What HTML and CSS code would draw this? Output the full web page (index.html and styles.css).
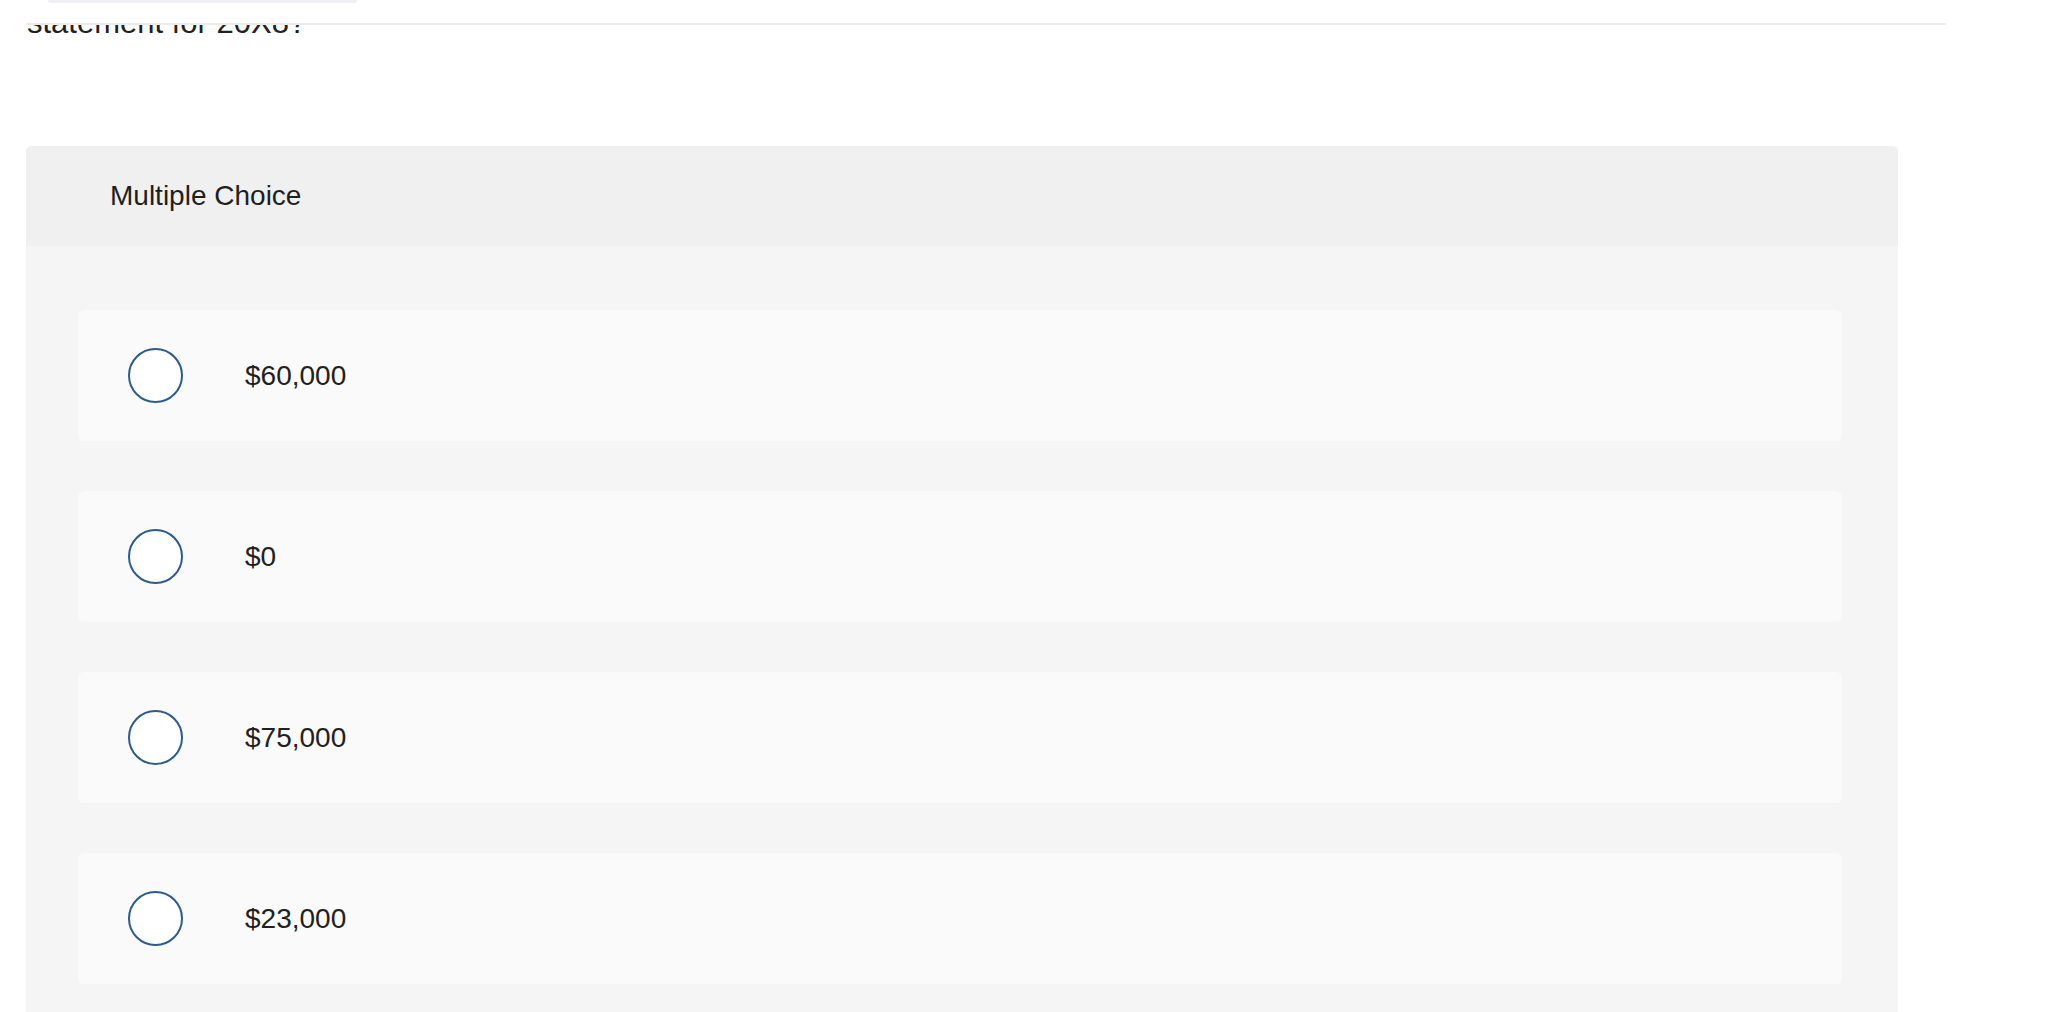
FILE: index.html
```html
<!DOCTYPE html>
<html lang="en">
<head>
<meta charset="utf-8">
<title>Multiple Choice</title>
<link rel="stylesheet" href="styles.css">
</head>
<body>
  <div class="topbar">
    <div class="pill"></div>
  </div>
  <div class="question-clip">
    <p class="question">statement for 20X8?</p>
  </div>
  <section class="card">
    <header class="card-head">Multiple Choice</header>
    <div class="card-body">
      <label class="option"><span class="radio"></span><span class="answer">$60,000</span></label>
      <label class="option"><span class="radio"></span><span class="answer">$0</span></label>
      <label class="option"><span class="radio"></span><span class="answer">$75,000</span></label>
      <label class="option"><span class="radio"></span><span class="answer">$23,000</span></label>
    </div>
  </section>
</body>
</html>
```

FILE: styles.css
```css
html, body {
  margin: 0;
  padding: 0;
  background: #ffffff;
}

body {
  font-family: "Liberation Sans", Arial, sans-serif;
  color: #212121;
  overflow: hidden;
}

.topbar {
  margin-left: 26px;
  width: 1920px;
  height: 23px;
  border-bottom: 2px solid #ececec;
  box-sizing: content-box;
}

.pill {
  margin-left: 22px;
  width: 309px;
  height: 3px;
  background: #edf1f6;
  border-radius: 0 0 4px 4px;
}

.question-clip {
  height: 20px;
  overflow: hidden;
  margin-left: 27px;
}

.question {
  margin: -20px 0 0 0;
  font-size: 31px;
  line-height: 36px;
  color: #212121;
  white-space: nowrap;
}

.card {
  margin: 101px 0 0 26px;
  width: 1872px;
  border-radius: 5px 5px 0 0;
  overflow: hidden;
}

.card-head {
  height: 100px;
  background: #f0f0f0;
  display: flex;
  align-items: center;
  padding-left: 84px;
  font-size: 28px;
  color: #1f1f1f;
}

.card-body {
  background: #f5f5f5;
  padding: 64px 56px 64px 52px;
  display: flex;
  flex-direction: column;
  gap: 50px;
}

.option {
  height: 131px;
  background: #fafafa;
  border-radius: 6px;
  display: flex;
  align-items: center;
  padding-left: 50px;
}

.radio {
  box-sizing: border-box;
  width: 55px;
  height: 55px;
  border: 2px solid #2c5b8f;
  border-radius: 50%;
  background: #ffffff;
  flex: none;
}

.answer {
  margin-left: 62px;
  font-size: 28px;
  color: #212121;
}
```
